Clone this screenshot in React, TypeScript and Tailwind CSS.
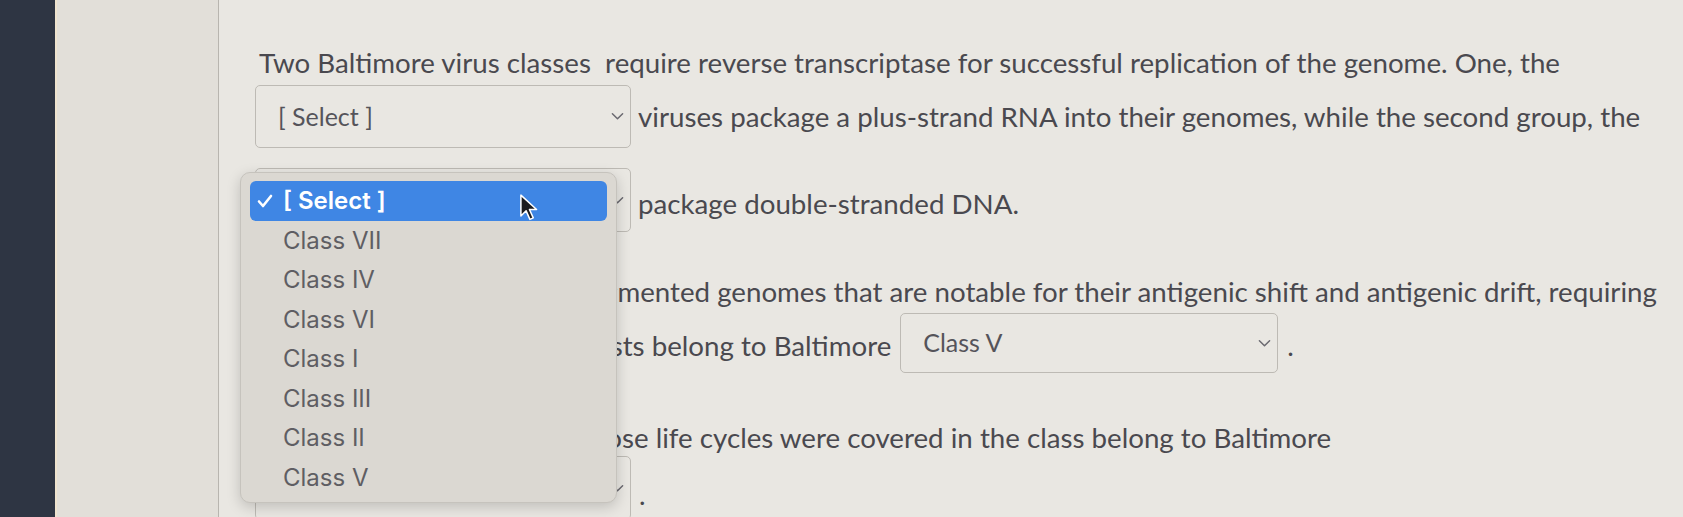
import React from 'react';

const OPTIONS = ['Class VII', 'Class IV', 'Class VI', 'Class I', 'Class III', 'Class II', 'Class V'];

const Chevron: React.FC<{ className?: string }> = ({ className }) => (
  <svg viewBox="0 0 14 9" className={className} fill="none" stroke="currentColor" strokeWidth={1.6} strokeLinecap="round" strokeLinejoin="round">
    <path d="M1.5 1.5 7 7l5.5-5.5" />
  </svg>
);

interface SelectBoxProps {
  value: string;
  width: string;
}

const SelectBox: React.FC<SelectBoxProps> = ({ value, width }) => (
  <div className={`${width} h-full shrink-0 flex items-center justify-between pl-[22px] pr-[6px] border-[1.5px] border-[#bdbab4] rounded-[5px] bg-[#e9e7e2] text-[25px] text-[#55545a]`}>
    <span>{value}</span>
    <Chevron className="w-[13px] h-[9px] text-[#6a6970]" />
  </div>
);

const Cursor: React.FC = () => (
  <svg viewBox="0 0 20 30" className="absolute left-[269px] top-[12px] w-[19px] h-[29px]">
    <path d="M2 2v22l5.5-5.5 4 9 3.5-1.6-4-8.8H18.5z" fill="#1b1b1e" stroke="#ffffff" strokeWidth={1.6} strokeLinejoin="round" />
  </svg>
);

const OptionsMenu: React.FC = () => (
  <div className="absolute left-[21px] top-[172px] w-[377px] h-[331px] rounded-[10px] border border-[#c6c3bd] bg-[#dbd8d2] shadow-[0_4px_14px_rgba(0,0,0,0.18)] px-[9px] pt-[8px] font-['Inter',sans-serif]">
    <div className="relative h-[40px] rounded-[6px] bg-[#3f86e4] flex items-center text-white text-[24px] font-semibold">
      <span className="w-[33px] pl-[7px] flex items-center">
        <svg viewBox="0 0 16 14" className="w-[16px] h-[14px]" fill="none" stroke="currentColor" strokeWidth={2.6} strokeLinecap="round" strokeLinejoin="round">
          <path d="M2 7.5 6 12 14 2" />
        </svg>
      </span>
      <span>[ Select ]</span>
      <Cursor />
    </div>
    {OPTIONS.map((opt) => (
      <div key={opt} className="h-[39.5px] flex items-center pl-[33px] text-[24px] text-[#5f5e63]">
        {opt}
      </div>
    ))}
  </div>
);

export default function App() {
  return (
    <div className="flex w-[1683px] h-[517px] overflow-hidden bg-[#e9e7e2] font-['Lato',sans-serif]">
      <div className="w-[55px] shrink-0 bg-[#2e3543]" />
      <div className="w-[2px] shrink-0 bg-[#efe3cf]" />
      <div className="w-[162px] shrink-0 bg-[#e2dfd9] border-r border-[#b8b5af]" />

      <main className="relative flex-1 pl-[36px] text-[27.7px] text-[#4a494f] whitespace-nowrap">
        <div className="mt-[43px] h-[40px] flex items-center pl-[4px]">
          Two Baltimore virus classes&nbsp; require reverse transcriptase for successful replication of the genome. One, the
        </div>

        <div className="mt-[2px] h-[63px] flex items-center gap-[7px]">
          <SelectBox value="[ Select ]" width="w-[376px]" />
          <span>viruses package a plus-strand RNA into their genomes, while the second group, the</span>
        </div>

        <div className="mt-[20px] h-[64px] flex items-center gap-[7px]">
          <SelectBox value="[ Select ]" width="w-[376px]" />
          <span className="pt-[8px]">package double-stranded DNA.</span>
        </div>

        <div className="mt-[40px] h-[40px] flex items-center pl-[4px]">
          Orthomyxoviruses harbor segmented genomes that are notable for their antigenic shift and antigenic drift, requiring
        </div>

        <div className="mt-[1px] h-[60px] flex items-center gap-[9px] pl-[4px]">
          <span className="pt-[6px]">updated vaccines; all their hosts belong to Baltimore</span>
          <SelectBox value="Class V" width="w-[378px]" />
          <span className="pt-[6px]">.</span>
        </div>

        <div className="mt-[47px] h-[36px] flex items-center pl-[4px]">
          All the enveloped viruses whose life cycles were covered in the class belong to Baltimore
        </div>

        <div className="h-[64px] flex items-center gap-[8px]">
          <SelectBox value="[ Select ]" width="w-[376px]" />
          <span className="pt-[14px]">.</span>
        </div>

        <OptionsMenu />
      </main>
    </div>
  );
}
